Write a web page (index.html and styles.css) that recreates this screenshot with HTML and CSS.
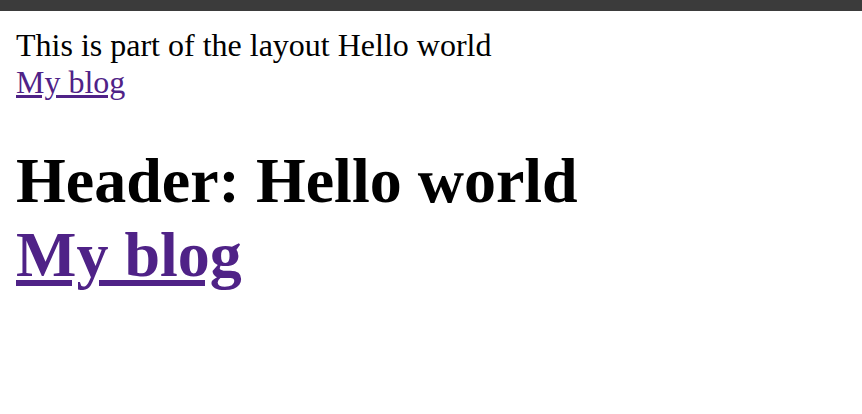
FILE: index.html
```html
<!DOCTYPE html>
<html>
<head>
<meta charset="utf-8">
<link rel="stylesheet" href="styles.css">
</head>
<body>
<div class="topbar"></div>
<div class="page">
  <div class="layout">This is part of the layout Hello world<br><a class="link" href="#">My blog</a></div>
  <h1 class="header">Header: Hello world<br><a class="link" href="#">My blog</a></h1>
</div>
</body>
</html>
```
FILE: styles.css
```css
html, body {
  margin: 0;
  padding: 0;
  background: #ffffff;
}
body {
  font-family: "Liberation Serif", "Times New Roman", serif;
  font-size: 32px;
  color: #000000;
}
.topbar {
  height: 11px;
  background: #3b3b3b;
}
.page {
  padding: 16px;
}
.layout {
  line-height: normal;
}
.link {
  color: #4f2287;
  text-decoration: underline;
}
.header {
  font-size: 64px;
  font-weight: bold;
  margin: 43px 0;
  line-height: normal;
}
```
